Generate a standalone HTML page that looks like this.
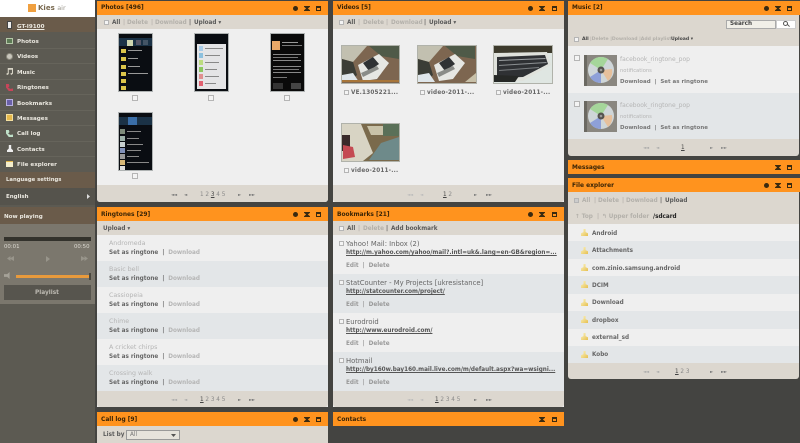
<!DOCTYPE html>
<html style="background:#444441"><head><meta charset="utf-8"><style>
html,body{margin:0;padding:0;width:800px;height:443px;overflow:hidden}
body{position:relative;font-family:"DejaVu Sans","Liberation Sans",sans-serif;font-size:5.7px;color:#555;filter:blur(.35px)}
div,span,svg{position:absolute;box-sizing:border-box}
.t{white-space:nowrap;line-height:8px;height:8px;transform:translateY(1px)}
b{font-weight:bold}
.s{position:static}
.n{color:#ebe8e0;font-weight:bold;left:17px;font-size:5.6px}
.hd{background:#ff931e}
.ti{color:#3a2406;font-weight:bold;font-size:5.9px}
.tb{background:#dcd7cf}
.ct{background:#efefef}
.alt{background:#e3e6e8}
.pg{background:#dcd7cf}
.cb{width:5px;height:5px;border:1px solid #b5b5b5;background:#f4f4f4}
.g{color:#b3b0aa;font-weight:bold}
.d{color:#5a5a5a;font-weight:bold}
.l{color:#b5b5b5}
.u{text-decoration:underline}
.i1{width:5px;height:5px;background:#3a2a10;border-radius:50%}
.i2{width:6px;height:5px;background:#3a2a10;clip-path:polygon(0 0,100% 0,100% 15%,65% 50%,100% 85%,100% 100%,0 100%,0 85%,35% 50%,0 15%)}
.i3{width:5px;height:5px;border:1px solid #3a2a10;border-top-width:2px}
.ar{font-size:4.2px;letter-spacing:-.4px}
.sep{left:0;width:95px;height:1px;background:#66645b}
.fo{left:581px;width:7px;height:7px;background:linear-gradient(135deg,#fbf3c0,#e6c050);clip-path:polygon(35% 0,65% 0,65% 45%,100% 60%,100% 100%,0 100%,0 60%,35% 45%)}
.nm{color:#666;font-size:6.8px}
.rt{left:109px;font-weight:bold;color:#666}
.rn{left:109px;color:#b5b5b5;font-size:6.3px}
.fn{left:592px;color:#666;font-weight:bold}
.ed{left:346px;font-weight:bold;color:#999}
.ur{left:346px;color:#555;font-weight:bold;text-decoration:underline}
.vl{color:#666;font-weight:bold;font-size:5.7px;letter-spacing:.2px}
</style></head><body>

<!-- sidebar -->
<div style="left:0;top:0;width:95px;height:443px;background:#5c5a52"></div>
<div style="left:0;top:0;width:95px;height:17px;background:#fff"></div>
<div style="left:28px;top:4px;width:8px;height:8px;background:#f0a040"></div>
<div class="t" style="left:38px;top:3px;font-size:7px;font-weight:bold;color:#7a6a50;line-height:9px;height:9px">Kies <span class="s" style="font-weight:normal;color:#9a968c;font-size:6.5px">air</span></div>
<div style="left:0;top:17px;width:95px;height:15px;background:#6a5b4a"></div>
<div class="t n u" style="top:22px">GT-I9100</div>
<div class="t n" style="top:37px">Photos</div>
<div class="t n" style="top:52px">Videos</div>
<div class="t n" style="top:68px">Music</div>
<div class="t n" style="top:83px">Ringtones</div>
<div class="t n" style="top:99px">Bookmarks</div>
<div class="t n" style="top:114px">Messages</div>
<div class="t n" style="top:129px">Call log</div>
<div class="t n" style="top:145px">Contacts</div>
<div class="t n" style="top:160px">File explorer</div>
<div class="sep" style="top:48px"></div><div class="sep" style="top:63px"></div><div class="sep" style="top:79px"></div><div class="sep" style="top:94px"></div><div class="sep" style="top:110px"></div><div class="sep" style="top:125px"></div><div class="sep" style="top:141px"></div><div class="sep" style="top:156px"></div>
<!-- side icons -->
<div style="left:7px;top:21px;width:5px;height:8px;background:#eee;border:1px solid #444"></div>
<div style="left:6px;top:38px;width:7px;height:6px;background:#5d7a55;border:1px solid #b5c8a8"></div>
<div style="left:6px;top:53px;width:7px;height:7px;border-radius:50%;background:#c8c6bc;border:1px solid #8a887c"></div>
<div style="left:6px;top:68px;width:7px;height:7px;background:#d8d4c6;clip-path:polygon(25% 0,100% 0,100% 80%,75% 100%,60% 80%,85% 70%,85% 25%,40% 25%,40% 85%,20% 100%,0 85%,25% 70%)"></div>
<div style="left:6px;top:84px;width:7px;height:7px;background:#c8455a;clip-path:polygon(0 0,40% 0,50% 30%,30% 50%,60% 70%,100% 65%,100% 100%,40% 100%,0 50%)"></div>
<div style="left:6px;top:99px;width:7px;height:7px;background:#6a60a8;border:1px solid #b8b0e0"></div>
<div style="left:6px;top:114px;width:7px;height:7px;background:#e6b84a;border:1px solid #f4e0a0"></div>
<div style="left:6px;top:130px;width:7px;height:7px;background:#bfe0c8;clip-path:polygon(0 0,40% 0,50% 30%,30% 50%,60% 70%,100% 65%,100% 100%,40% 100%,0 50%)"></div>
<div style="left:7px;top:145px;width:6px;height:7px;background:#eee;clip-path:polygon(30% 0,70% 0,70% 50%,100% 75%,100% 100%,0 100%,0 75%,30% 50%)"></div>
<div style="left:6px;top:161px;width:7px;height:6px;background:#f4eecc;border-top:1px solid #e2b84c"></div>

<div style="left:0;top:172px;width:95px;height:16px;background:#6a5b4a"></div>
<div class="t n" style="left:6px;top:175px;font-size:5.3px">Language settings</div>
<div style="left:0;top:188px;width:95px;height:17px;background:#55534c"></div>
<div class="t n" style="left:6px;top:192px;font-size:5.5px">English</div>
<div style="left:87px;top:194px;width:3px;height:5px;background:#ddd;clip-path:polygon(0 0,100% 50%,0 100%)"></div>
<div style="left:0;top:207px;width:95px;height:17px;background:#6a5b4a"></div>
<div class="t n" style="left:4px;top:212px;font-size:5.6px">Now playing</div>

<div style="left:0;top:224px;width:95px;height:80px;background:#7b776d"></div>
<div style="left:4px;top:237px;width:87px;height:4px;background:#33322c"></div>
<div class="t" style="left:4px;top:242px;color:#dedbd3;font-size:5.4px">00:01</div>
<div class="t" style="left:74px;top:242px;color:#dedbd3;font-size:5.4px">00:50</div>
<div style="left:7px;top:256px;width:7px;height:5px;background:#98958b;clip-path:polygon(50% 0,50% 40%,100% 0,100% 100%,50% 60%,50% 100%,0 50%)"></div>
<div style="left:46px;top:256px;width:4px;height:6px;background:#98958b;clip-path:polygon(0 0,100% 50%,0 100%)"></div>
<div style="left:81px;top:256px;width:7px;height:5px;background:#98958b;clip-path:polygon(0 0,50% 40%,50% 0,100% 50%,50% 100%,50% 60%,0 100%)"></div>
<div style="left:4px;top:272px;width:8px;height:7px;background:#a5a298;clip-path:polygon(0 30%,40% 30%,70% 0,70% 100%,40% 70%,0 70%)"></div>
<div style="left:16px;top:275px;width:75px;height:3px;background:#e89a3c"></div>
<div style="left:89px;top:273px;width:2px;height:7px;background:#4a4840"></div>
<div style="left:4px;top:285px;width:87px;height:15px;background:#57554e"></div>
<div class="t" style="left:35px;top:288px;color:#bdbab2;font-size:5.8px;font-weight:bold">Playlist</div>

<!-- Photos -->
<div class="ct" style="left:97px;top:1px;width:231px;height:201px;border-radius:0 0 3px 3px"></div>
<div class="hd" style="left:97px;top:1px;width:231px;height:14px"></div>
<div class="t ti" style="left:101px;top:3px">Photos [496]</div>
<div class="i1" style="left:293px;top:6px"></div><div class="i2" style="left:304px;top:6px"></div><div class="i3" style="left:316px;top:6px"></div>
<div class="tb" style="left:97px;top:15px;width:231px;height:14px"></div>
<div class="cb" style="left:104px;top:20px"></div>
<div class="t d" style="left:112px;top:18px">All</div><div class="t g" style="left:123px;top:18px">|</div><div class="t g" style="left:127px;top:18px">Delete</div><div class="t g" style="left:151px;top:18px">|</div><div class="t g" style="left:155px;top:18px">Download</div><div class="t d" style="left:189px;top:18px">|</div><div class="t d" style="left:194px;top:18px">Upload &#9662;</div>
<div class="pg" style="left:97px;top:185px;width:231px;height:17px;border-radius:0 0 3px 3px"></div>
<div class="t ar" style="left:171px;top:190px;color:#777">&#9668;&#9668;</div><div class="t ar" style="left:184px;top:190px;color:#777">&#9668;</div>
<div class="t" style="left:200px;top:190px;color:#888">1 2 <span class="u s" style="color:#444">3</span> 4 5</div>
<div class="t ar" style="left:238px;top:190px;color:#777">&#9658;</div><div class="t ar" style="left:249px;top:190px;color:#777">&#9658;&#9658;</div>

<!-- phone thumbs -->
<svg style="left:118px;top:33px" width="35" height="59"><rect width="35" height="59" fill="#aeb2b2"/><rect x="1" y="1" width="33" height="57" fill="#0a0d12"/><rect x="1" y="5" width="33" height="8" fill="#1b3246"/><rect x="9" y="7" width="6" height="6" fill="#cfd6b0"/><rect x="18" y="7" width="5" height="5" fill="#556"/><rect x="25" y="7" width="5" height="5" fill="#456"/><rect x="3" y="16" width="5" height="4" fill="#dcc54a"/><rect x="3" y="24" width="5" height="4" fill="#dcc54a"/><rect x="3" y="32" width="5" height="4" fill="#dcc54a"/><rect x="3" y="39" width="5" height="4" fill="#dcc54a"/><rect x="3" y="46" width="5" height="4" fill="#dcc54a"/><rect x="3" y="53" width="5" height="4" fill="#dcc54a"/><rect x="10" y="17" width="14" height="1" fill="#999"/><rect x="10" y="25" width="10" height="1" fill="#999"/><rect x="10" y="33" width="12" height="1" fill="#999"/><rect x="10" y="40" width="20" height="1" fill="#999"/></svg>
<svg style="left:194px;top:33px" width="35" height="59"><rect width="35" height="59" fill="#aeb2b2"/><rect x="1" y="1" width="33" height="57" fill="#0a0d12"/><rect x="3" y="11" width="29" height="45" fill="#e4e4e6"/><rect x="5" y="13" width="4" height="5" fill="#a8cce8"/><rect x="5" y="20" width="4" height="5" fill="#8cc0de"/><rect x="5" y="27" width="4" height="5" fill="#bcdc80"/><rect x="5" y="34" width="4" height="5" fill="#8cc860"/><rect x="5" y="41" width="4" height="5" fill="#e09090"/><rect x="5" y="48" width="4" height="5" fill="#e06070"/><rect x="11" y="15" width="18" height="1" fill="#888"/><rect x="11" y="22" width="15" height="1" fill="#888"/><rect x="11" y="29" width="14" height="1" fill="#888"/><rect x="11" y="36" width="12" height="1" fill="#888"/><rect x="11" y="43" width="14" height="1" fill="#888"/><rect x="11" y="50" width="11" height="1" fill="#888"/></svg>
<svg style="left:270px;top:33px" width="35" height="59"><rect width="35" height="59" fill="#aeb2b2"/><rect x="1" y="1" width="33" height="57" fill="#0a0a0a"/><rect x="2" y="8" width="8" height="9" fill="#e8a868"/><rect x="12" y="9" width="16" height="1" fill="#999"/><rect x="12" y="12" width="20" height="1" fill="#777"/><rect x="3" y="21" width="28" height="1" fill="#888"/><rect x="3" y="24" width="25" height="1" fill="#777"/><rect x="3" y="27" width="28" height="1" fill="#888"/><rect x="3" y="33" width="28" height="1" fill="#888"/><rect x="3" y="36" width="26" height="1" fill="#777"/><rect x="3" y="39" width="28" height="1" fill="#888"/><rect x="3" y="44" width="14" height="1" fill="#777"/><rect x="3" y="50" width="10" height="6" fill="#333"/><rect x="21" y="50" width="10" height="6" fill="#444"/></svg>
<svg style="left:118px;top:112px" width="35" height="59"><rect width="35" height="59" fill="#aeb2b2"/><rect x="1" y="1" width="33" height="57" fill="#0a0d12"/><rect x="1" y="5" width="33" height="8" fill="#1b3246"/><rect x="10" y="5" width="9" height="8" fill="#3a6ea8"/><rect x="2" y="17" width="5" height="5" fill="#7d8a7a"/><rect x="2" y="24" width="5" height="5" fill="#9cb0a8"/><rect x="2" y="30" width="5" height="5" fill="#c8d0d0"/><rect x="2" y="36" width="5" height="5" fill="#8090b8"/><rect x="2" y="42" width="5" height="5" fill="#999"/><rect x="2" y="48" width="5" height="5" fill="#d8b878"/><rect x="2" y="54" width="5" height="4" fill="#ddd"/><rect x="9" y="19" width="14" height="1" fill="#888"/><rect x="9" y="26" width="12" height="1" fill="#888"/><rect x="9" y="32" width="16" height="1" fill="#888"/><rect x="9" y="38" width="14" height="1" fill="#888"/><rect x="9" y="44" width="12" height="1" fill="#888"/><rect x="9" y="50" width="22" height="1" fill="#888"/></svg>
<div class="cb" style="left:132px;top:95px;width:6px;height:6px"></div>
<div class="cb" style="left:208px;top:95px;width:6px;height:6px"></div>
<div class="cb" style="left:284px;top:95px;width:6px;height:6px"></div>
<div class="cb" style="left:132px;top:173px;width:6px;height:6px"></div>

<!-- Videos -->
<div class="ct" style="left:333px;top:1px;width:231px;height:201px"></div>
<div class="hd" style="left:333px;top:1px;width:231px;height:14px"></div>
<div class="t ti" style="left:337px;top:3px">Videos [5]</div>
<div class="i1" style="left:528px;top:6px"></div><div class="i2" style="left:539px;top:6px"></div><div class="i3" style="left:552px;top:6px"></div>
<div class="tb" style="left:333px;top:15px;width:231px;height:14px"></div>
<div class="cb" style="left:339px;top:20px"></div>
<div class="t d" style="left:347px;top:18px">All</div><div class="t g" style="left:358px;top:18px">|</div><div class="t g" style="left:363px;top:18px">Delete</div><div class="t g" style="left:386px;top:18px">|</div><div class="t g" style="left:391px;top:18px">Download</div><div class="t d" style="left:424px;top:18px">|</div><div class="t d" style="left:429px;top:18px">Upload &#9662;</div>

<svg style="left:341px;top:45px" width="59" height="39"><rect width="59" height="39" fill="#b0b2aa"/><rect x="1" y="1" width="57" height="37" fill="#7d6650"/><polygon points="1,1 26,1 12,17 1,14" fill="#c2c0b0"/><polygon points="1,14 12,17 16,30 8,37 1,37" fill="#3b3d36"/><polygon points="1,30 12,28 18,37 1,37" fill="#dfe6ea"/><polygon points="28,1 58,1 58,14 40,11" fill="#4f5a48"/><polygon points="17,20 38,9 48,18 36,34 22,36" fill="#e6e7e3"/><polygon points="22,18 32,12 38,19 28,26" fill="#2f3234"/><polygon points="20,28 36,21 38,24 22,32" fill="#8a8c88"/><rect x="1" y="35" width="57" height="2" fill="#a8763a"/></svg>
<svg style="left:417px;top:45px" width="60" height="39"><rect width="60" height="39" fill="#b0b2aa"/><rect x="1" y="1" width="58" height="37" fill="#7d6650"/><polygon points="1,1 26,1 12,17 1,14" fill="#c2c0b0"/><polygon points="1,14 12,17 16,30 8,37 1,37" fill="#3b3d36"/><polygon points="1,30 12,28 18,37 1,37" fill="#dfe6ea"/><polygon points="28,1 58,1 58,14 40,11" fill="#4f5a48"/><polygon points="17,20 38,9 48,18 36,34 22,36" fill="#e6e7e3"/><polygon points="22,18 32,12 38,19 28,26" fill="#2f3234"/><polygon points="20,28 36,21 38,24 22,32" fill="#8a8c88"/><polygon points="48,37 59,28 59,37" fill="#c8c0a8"/></svg>
<svg style="left:493px;top:45px" width="60" height="39"><rect width="60" height="39" fill="#b0b2aa"/><rect x="1" y="1" width="58" height="37" fill="#dfe6e2"/><rect x="1" y="1" width="58" height="7" fill="#3d3a2c"/><polygon points="1,8 54,7 58,20 30,36 1,37" fill="#e0e2dc"/><polygon points="4,12 52,10 55,19 30,32 4,33" fill="#2f3134"/><polygon points="6,15 52,13 53,14 6,16" fill="#9a9ea0"/><polygon points="6,20 53,17 54,18 6,21" fill="#8a8e90"/><polygon points="6,25 46,22 46,23 6,26" fill="#7a7e80"/><polygon points="1,30 26,31 22,37 1,37" fill="#262826"/></svg>
<svg style="left:341px;top:123px" width="59" height="39"><rect width="59" height="39" fill="#b0b2aa"/><rect x="1" y="1" width="57" height="37" fill="#7a6a4c"/><polygon points="1,1 20,1 32,30 22,38 1,38" fill="#d8d4c4"/><rect x="1" y="12" width="8" height="16" fill="#3a2a2a"/><polygon points="2,22 12,24 14,34 2,36" fill="#c44a52"/><polygon points="40,20 58,14 58,37 28,37" fill="#6e8a8a"/><polygon points="26,3 42,3 44,12 30,12" fill="#c8c2a8"/><rect x="42" y="1" width="16" height="12" fill="#5a7058"/></svg>

<div class="cb" style="left:344px;top:90px"></div><div class="t vl" style="left:351px;top:88px">VE.1305221...</div>
<div class="cb" style="left:420px;top:90px"></div><div class="t vl" style="left:427px;top:88px">video-2011-...</div>
<div class="cb" style="left:496px;top:90px"></div><div class="t vl" style="left:503px;top:88px">video-2011-...</div>
<div class="cb" style="left:344px;top:168px"></div><div class="t vl" style="left:351px;top:166px">video-2011-...</div>
<div class="pg" style="left:333px;top:185px;width:231px;height:17px;border-radius:0 0 3px 3px"></div>
<div class="t ar" style="left:407px;top:190px;color:#bbb">&#9668;&#9668;</div><div class="t ar" style="left:420px;top:190px;color:#bbb">&#9668;</div>
<div class="t" style="left:443px;top:190px;color:#888"><span class="u s" style="color:#444">1</span> 2</div>
<div class="t ar" style="left:474px;top:190px;color:#777">&#9658;</div><div class="t ar" style="left:486px;top:190px;color:#777">&#9658;&#9658;</div>

<!-- Music -->
<div class="tb" style="left:568px;top:1px;width:231px;height:155px;border-radius:0 0 3px 3px"></div>
<div class="hd" style="left:568px;top:1px;width:232px;height:14px"></div>
<div class="t ti" style="left:572px;top:3px">Music [2]</div>
<div class="i1" style="left:764px;top:6px"></div><div class="i2" style="left:775px;top:6px"></div><div class="i3" style="left:787px;top:6px"></div>
<div style="left:726px;top:20px;width:50px;height:9px;background:#f1efe8;border:1px solid #aaa"></div>
<div style="left:776px;top:20px;width:20px;height:9px;background:#fff;border:1px solid #ccc"></div>
<div class="t d" style="left:730px;top:19px;color:#444">Search</div>
<div style="left:783px;top:21px;width:5px;height:5px;border:1px solid #555;border-radius:50%"></div>
<div style="left:787px;top:25px;width:3px;height:1px;background:#555;transform:rotate(45deg)"></div>
<div class="cb" style="left:574px;top:37px"></div>
<div class="t d" style="left:582px;top:35px;font-size:4.6px;color:#444">All</div>
<div class="t g" style="left:590px;top:35px;font-size:4.6px">|Delete |Download |Add playlist |</div>
<div class="t d" style="left:671px;top:35px;font-size:4.6px;color:#444">Upload &#9662;</div>
<div class="ct" style="left:568px;top:46px;width:231px;height:47px"></div>
<div class="alt" style="left:568px;top:93px;width:231px;height:46px"></div>
<div class="cb" style="left:574px;top:55px;width:6px;height:6px"></div>
<div class="cb" style="left:574px;top:101px;width:6px;height:6px"></div>
<svg style="left:584px;top:55px" width="33" height="31"><rect width="33" height="31" fill="#8a8780"/><rect width="3" height="31" fill="#6b6962"/><circle cx="17" cy="15" r="13" fill="#cfd6d8"/><path d="M17 15L6 8A13 13 0 0 1 24 4Z" fill="#a5d69a"/><path d="M17 15L6 22A13 13 0 0 0 17 28Z" fill="#8ea0d8"/><path d="M17 15L28 14A13 13 0 0 1 24 26Z" fill="#e6c09c"/><circle cx="17" cy="15" r="3.5" fill="#55534e"/><circle cx="17" cy="15" r="1.3" fill="#999"/></svg>
<svg style="left:584px;top:101px" width="33" height="31"><rect width="33" height="31" fill="#8a8780"/><rect width="3" height="31" fill="#6b6962"/><circle cx="17" cy="15" r="13" fill="#cfd6d8"/><path d="M17 15L6 8A13 13 0 0 1 24 4Z" fill="#a5d69a"/><path d="M17 15L6 22A13 13 0 0 0 17 28Z" fill="#8ea0d8"/><path d="M17 15L28 14A13 13 0 0 1 24 26Z" fill="#e6c09c"/><circle cx="17" cy="15" r="3.5" fill="#55534e"/><circle cx="17" cy="15" r="1.3" fill="#999"/></svg>
<div class="t l" style="left:620px;top:55px;font-size:6px">facebook_ringtone_pop</div>
<div class="t l" style="left:620px;top:66px;font-size:5.2px">notifications</div>
<div class="t" style="left:620px;top:77px;font-weight:bold;color:#777;font-size:5.5px">Download &nbsp;|&nbsp; Set as ringtone</div>
<div class="t l" style="left:620px;top:101px;font-size:6px">facebook_ringtone_pop</div>
<div class="t l" style="left:620px;top:112px;font-size:5.2px">notifications</div>
<div class="t" style="left:620px;top:123px;font-weight:bold;color:#777;font-size:5.5px">Download &nbsp;|&nbsp; Set as ringtone</div>
<div class="t ar" style="left:643px;top:143px;color:#aaa">&#9668;&#9668;</div><div class="t ar" style="left:656px;top:143px;color:#aaa">&#9668;</div>
<div class="t u" style="left:681px;top:143px;color:#444">1</div>
<div class="t ar" style="left:710px;top:143px;color:#888">&#9658;</div><div class="t ar" style="left:721px;top:143px;color:#888">&#9658;&#9658;</div>

<!-- Messages -->
<div class="hd" style="left:568px;top:160px;width:232px;height:14px"></div>
<div class="t ti" style="left:572px;top:163px">Messages</div>
<div class="i2" style="left:775px;top:165px"></div><div class="i3" style="left:787px;top:165px"></div>

<!-- File explorer -->
<div class="tb" style="left:568px;top:178px;width:231px;height:201px;border-radius:0 0 3px 3px"></div>
<div class="hd" style="left:568px;top:178px;width:232px;height:14px"></div>
<div class="t ti" style="left:572px;top:181px">File explorer</div>
<div class="i1" style="left:764px;top:183px"></div><div class="i2" style="left:775px;top:183px"></div><div class="i3" style="left:787px;top:183px"></div>
<div class="cb" style="left:574px;top:198px;background:#ccc"></div>
<div class="t g" style="left:582px;top:196px">All</div><div class="t g" style="left:594px;top:196px">|</div><div class="t g" style="left:598px;top:196px">Delete</div><div class="t g" style="left:622px;top:196px">|</div><div class="t g" style="left:626px;top:196px">Download</div><div class="t d" style="left:660px;top:196px">|</div><div class="t d" style="left:665px;top:196px">Upload</div>
<div class="t g" style="left:575px;top:212px">&#8593; Top</div><div class="t g" style="left:597px;top:212px">|</div><div class="t g" style="left:602px;top:212px">&#8624; Upper folder</div><div class="t" style="left:653px;top:212px;font-weight:bold;color:#222">/sdcard</div>
<div class="ct" style="left:568px;top:224px;width:231px;height:17px"></div>
<div class="alt" style="left:568px;top:241px;width:231px;height:18px"></div>
<div class="ct" style="left:568px;top:259px;width:231px;height:17px"></div>
<div class="alt" style="left:568px;top:276px;width:231px;height:18px"></div>
<div class="ct" style="left:568px;top:294px;width:231px;height:17px"></div>
<div class="alt" style="left:568px;top:311px;width:231px;height:18px"></div>
<div class="ct" style="left:568px;top:329px;width:231px;height:17px"></div>
<div class="alt" style="left:568px;top:346px;width:231px;height:17px"></div>
<div class="fo" style="top:229px"></div><div class="fo" style="top:247px"></div><div class="fo" style="top:264px"></div><div class="fo" style="top:281px"></div><div class="fo" style="top:299px"></div><div class="fo" style="top:316px"></div><div class="fo" style="top:333px"></div><div class="fo" style="top:351px"></div>
<div class="t fn" style="top:229px">Android</div>
<div class="t fn" style="top:246px">Attachments</div>
<div class="t fn" style="top:264px">com.zinio.samsung.android</div>
<div class="t fn" style="top:281px">DCIM</div>
<div class="t fn" style="top:298px">Download</div>
<div class="t fn" style="top:316px">dropbox</div>
<div class="t fn" style="top:333px">external_sd</div>
<div class="t fn" style="top:350px">Kobo</div>
<div class="t ar" style="left:643px;top:367px;color:#aaa">&#9668;&#9668;</div><div class="t ar" style="left:656px;top:367px;color:#aaa">&#9668;</div>
<div class="t" style="left:675px;top:367px;color:#888"><span class="u s" style="color:#444">1</span> 2 3</div>
<div class="t ar" style="left:710px;top:367px;color:#777">&#9658;</div><div class="t ar" style="left:721px;top:367px;color:#777">&#9658;&#9658;</div>

<!-- Ringtones -->
<div class="ct" style="left:97px;top:207px;width:231px;height:200px"></div>
<div class="hd" style="left:97px;top:207px;width:231px;height:14px"></div>
<div class="t ti" style="left:101px;top:210px">Ringtones [29]</div>
<div class="i1" style="left:293px;top:212px"></div><div class="i2" style="left:304px;top:212px"></div><div class="i3" style="left:316px;top:212px"></div>
<div class="tb" style="left:97px;top:221px;width:231px;height:14px"></div>
<div class="t d" style="left:103px;top:224px">Upload &#9662;</div>
<div class="alt" style="left:97px;top:261px;width:231px;height:26px"></div>
<div class="alt" style="left:97px;top:313px;width:231px;height:26px"></div>
<div class="alt" style="left:97px;top:365px;width:231px;height:26px"></div>
<div class="t rn" style="top:239px">Andromeda</div>
<div class="t rt" style="top:248px">Set as ringtone &nbsp;|&nbsp; <span class="s" style="color:#b5b5b5">Download</span></div>
<div class="t rn" style="top:265px">Basic bell</div>
<div class="t rt" style="top:274px">Set as ringtone &nbsp;|&nbsp; <span class="s" style="color:#b5b5b5">Download</span></div>
<div class="t rn" style="top:291px">Cassiopeia</div>
<div class="t rt" style="top:300px">Set as ringtone &nbsp;|&nbsp; <span class="s" style="color:#b5b5b5">Download</span></div>
<div class="t rn" style="top:317px">Chime</div>
<div class="t rt" style="top:326px">Set as ringtone &nbsp;|&nbsp; <span class="s" style="color:#b5b5b5">Download</span></div>
<div class="t rn" style="top:343px">A cricket chirps</div>
<div class="t rt" style="top:352px">Set as ringtone &nbsp;|&nbsp; <span class="s" style="color:#b5b5b5">Download</span></div>
<div class="t rn" style="top:369px">Crossing walk</div>
<div class="t rt" style="top:378px">Set as ringtone &nbsp;|&nbsp; <span class="s" style="color:#b5b5b5">Download</span></div>
<div class="pg" style="left:97px;top:391px;width:231px;height:16px;border-radius:0 0 3px 3px"></div>
<div class="t ar" style="left:171px;top:395px;color:#aaa">&#9668;&#9668;</div><div class="t ar" style="left:184px;top:395px;color:#aaa">&#9668;</div>
<div class="t" style="left:200px;top:395px;color:#888"><span class="u s" style="color:#444">1</span> 2 3 4 5</div>
<div class="t ar" style="left:238px;top:395px;color:#777">&#9658;</div><div class="t ar" style="left:249px;top:395px;color:#777">&#9658;&#9658;</div>

<!-- Call log -->
<div class="hd" style="left:97px;top:412px;width:231px;height:14px"></div>
<div class="t ti" style="left:101px;top:415px">Call log [9]</div>
<div class="i1" style="left:293px;top:417px"></div><div class="i2" style="left:304px;top:417px"></div><div class="i3" style="left:316px;top:417px"></div>
<div class="tb" style="left:97px;top:426px;width:231px;height:17px"></div>
<div class="t d" style="left:103px;top:430px">List by</div>
<div style="left:126px;top:430px;width:54px;height:10px;background:#e6e3dc;border:1px solid #999"></div>
<div class="t" style="left:130px;top:430px;color:#777">All</div>
<div style="left:171px;top:434px;width:5px;height:3px;background:#555;clip-path:polygon(0 0,100% 0,50% 100%)"></div>

<!-- Bookmarks -->
<div class="ct" style="left:333px;top:207px;width:231px;height:200px"></div>
<div class="hd" style="left:333px;top:207px;width:231px;height:14px"></div>
<div class="t ti" style="left:337px;top:210px">Bookmarks [21]</div>
<div class="i1" style="left:528px;top:212px"></div><div class="i2" style="left:539px;top:212px"></div><div class="i3" style="left:552px;top:212px"></div>
<div class="tb" style="left:333px;top:221px;width:231px;height:14px"></div>
<div class="cb" style="left:339px;top:226px"></div>
<div class="t d" style="left:347px;top:224px">All</div><div class="t g" style="left:358px;top:224px">|</div><div class="t g" style="left:363px;top:224px">Delete</div><div class="t d" style="left:386px;top:224px">|</div><div class="t d" style="left:391px;top:224px">Add bookmark</div>
<div class="alt" style="left:333px;top:274px;width:231px;height:39px"></div>
<div class="alt" style="left:333px;top:352px;width:231px;height:39px"></div>
<div class="cb" style="left:339px;top:241px"></div>
<div class="t nm" style="left:346px;top:239px">Yahoo! Mail: Inbox (2)</div>
<div class="t ur" style="top:248px">http://m.yahoo.com/yahoo/mail?.intl=uk&amp;.lang=en-GB&amp;region=...</div>
<div class="t ed" style="top:261px">Edit &nbsp;|&nbsp; Delete</div>
<div class="cb" style="left:339px;top:280px"></div>
<div class="t nm" style="left:346px;top:278px">StatCounter - My Projects [ukresistance]</div>
<div class="t ur" style="top:287px">http://statcounter.com/project/</div>
<div class="t ed" style="top:300px">Edit &nbsp;|&nbsp; Delete</div>
<div class="cb" style="left:339px;top:319px"></div>
<div class="t nm" style="left:346px;top:317px">Eurodroid</div>
<div class="t ur" style="top:326px">http://www.eurodroid.com/</div>
<div class="t ed" style="top:339px">Edit &nbsp;|&nbsp; Delete</div>
<div class="cb" style="left:339px;top:358px"></div>
<div class="t nm" style="left:346px;top:356px">Hotmail</div>
<div class="t ur" style="top:365px">http://by160w.bay160.mail.live.com/m/default.aspx?wa=wsigni...</div>
<div class="t ed" style="top:378px">Edit &nbsp;|&nbsp; Delete</div>
<div class="pg" style="left:333px;top:391px;width:231px;height:16px;border-radius:0 0 3px 3px"></div>
<div class="t ar" style="left:407px;top:395px;color:#bbb">&#9668;&#9668;</div><div class="t ar" style="left:420px;top:395px;color:#bbb">&#9668;</div>
<div class="t" style="left:435px;top:395px;color:#888"><span class="u s" style="color:#444">1</span> 2 3 4 5</div>
<div class="t ar" style="left:474px;top:395px;color:#777">&#9658;</div><div class="t ar" style="left:486px;top:395px;color:#777">&#9658;&#9658;</div>

<!-- Contacts -->
<div class="hd" style="left:333px;top:412px;width:231px;height:14px"></div>
<div class="t ti" style="left:337px;top:415px">Contacts</div>
<div class="i2" style="left:539px;top:417px"></div><div class="i3" style="left:552px;top:417px"></div>

</body></html>
